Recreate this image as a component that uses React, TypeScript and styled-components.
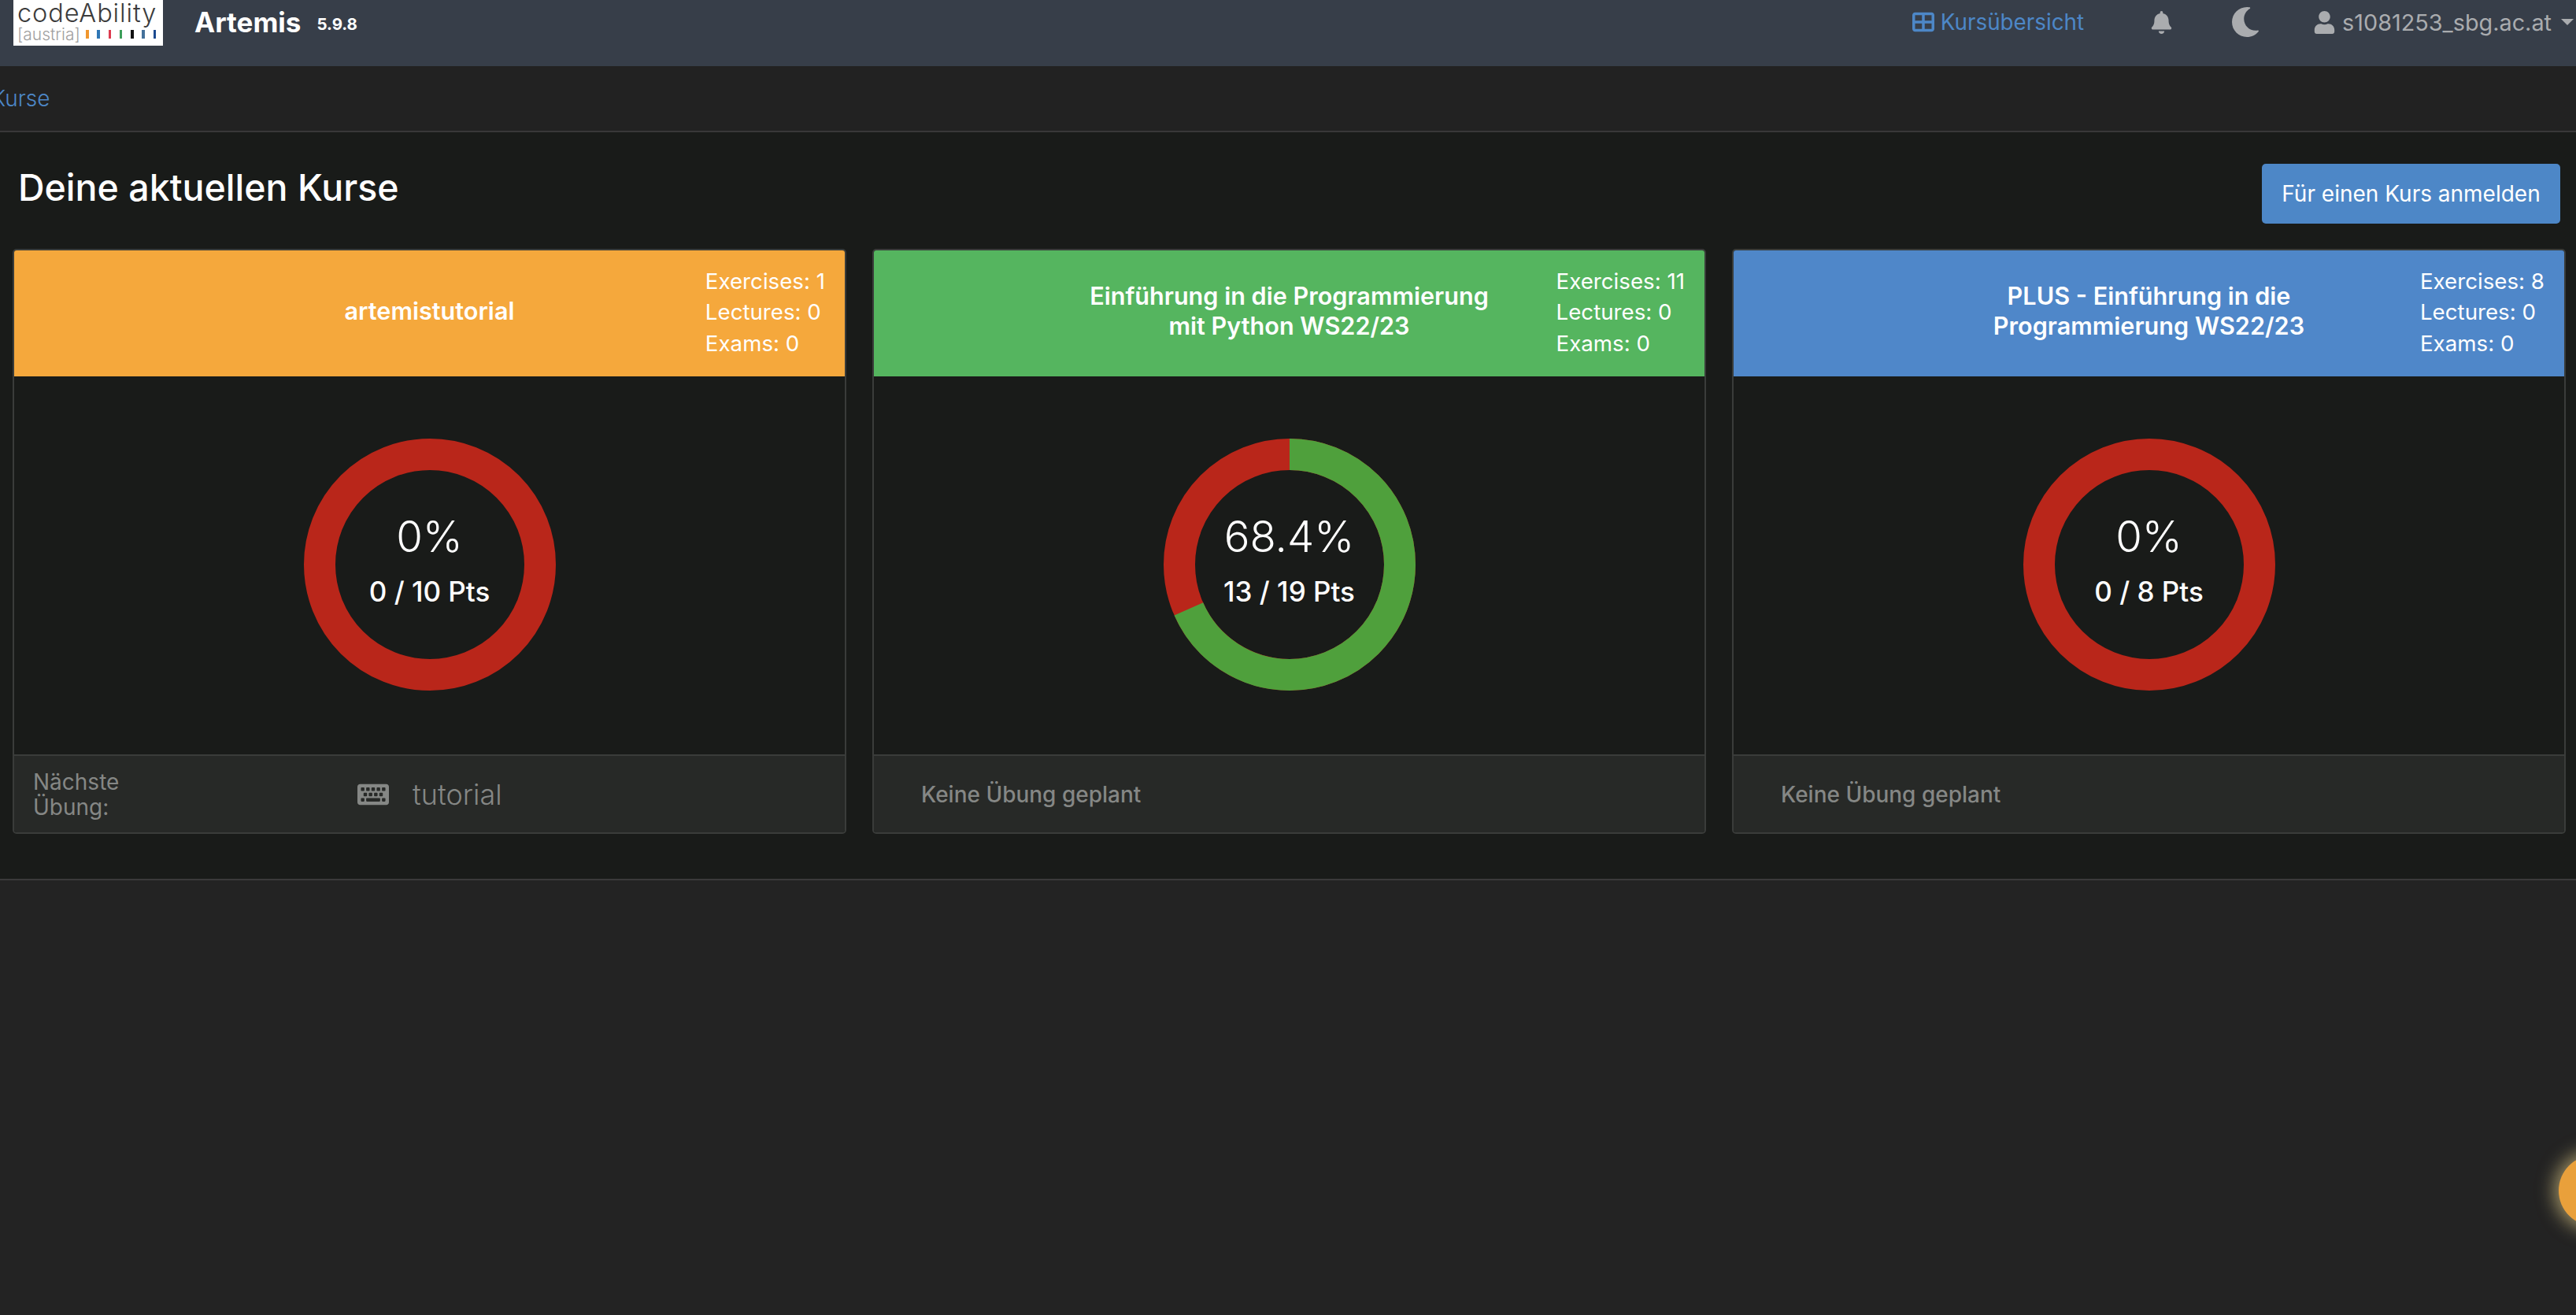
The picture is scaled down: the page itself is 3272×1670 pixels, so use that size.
import React from 'react';
import styled, { createGlobalStyle } from 'styled-components';
import { FaBell, FaKeyboard, FaMoon, FaUser } from 'react-icons/fa';
import { FaTableCellsLarge } from 'react-icons/fa6';

const GlobalStyle = createGlobalStyle`
  html, body {
    margin: 0;
    padding: 0;
    height: 100%;
    overflow: hidden;
    background: #232323;
    font-family: Inter, 'Liberation Sans', sans-serif;
  }
  * { box-sizing: border-box; }
`;

const Page = styled.div`
  display: flex;
  flex-direction: column;
  width: 100%;
  height: 1670px;
  background: #232323;
`;

const Navbar = styled.nav`
  display: flex;
  align-items: flex-start;
  justify-content: space-between;
  height: 84px;
  padding-left: 17px;
  background: #373e49;
`;

const Brand = styled.div`
  display: flex;
  align-items: flex-start;
`;

const Logo = styled.div`
  display: flex;
  flex-direction: column;
  width: 190px;
  height: 58px;
  padding: 0 5px;
  background: #fff;
`;

const LogoName = styled.span`
  font-family: Inter, sans-serif;
  font-size: 32.5px;
  font-weight: 300;
  letter-spacing: 0.9px;
  line-height: 34px;
  color: #3c3c3c;
  white-space: nowrap;
`;

const LogoRow = styled.div`
  display: flex;
  align-items: center;
  height: 19px;
`;

const LogoSub = styled.span`
  width: 87px;
  font-family: Inter, sans-serif;
  font-size: 21px;
  font-weight: 300;
  line-height: 19px;
  color: #9f9f9f;
  white-space: nowrap;
`;

const LogoTicks = styled.div`
  display: flex;
  gap: 10.75px;
`;

const LogoTick = styled.i<{ $color: string }>`
  display: block;
  width: 3.5px;
  height: 11px;
  background: ${(p) => p.$color};
`;

const AppName = styled.span`
  margin: 6px 0 0 40px;
  font-size: 35px;
  font-weight: 700;
  line-height: 44px;
  color: #fff;
`;

const Version = styled.span`
  margin: 19px 0 0 20px;
  font-size: 20.5px;
  font-weight: 700;
  line-height: 24px;
  color: #fff;
`;

const NavItems = styled.div`
  display: flex;
  align-items: center;
  height: 56px;
`;

const NavLink = styled.a<{ $active?: boolean; $size?: number }>`
  display: flex;
  align-items: center;
  gap: 8px;
  font-size: ${(p) => p.$size ?? 28.8}px;
  font-weight: 400;
  color: ${(p) => (p.$active ? '#4d87c7' : '#aaacaf')};
  white-space: nowrap;
`;

const Bell = styled(NavLink)`
  margin-left: 84px;
`;

const Moon = styled(NavLink)`
  margin-left: 73px;
`;

const UserLink = styled(NavLink)`
  margin-left: 67px;
`;

const Caret = styled.i`
  width: 0;
  height: 0;
  margin: 0 3px 0 4px;
  border-left: 8px solid transparent;
  border-right: 8px solid transparent;
  border-top: 8px solid #aaacaf;
`;

const Breadcrumb = styled.div`
  display: flex;
  align-items: center;
  height: 84px;
  border-bottom: 2px solid #383838;
  background: #222;
`;

const BreadcrumbLink = styled.a`
  margin-left: -11px;
  font-size: 28px;
  font-weight: 300;
  color: #4d87c7;
`;

const Content = styled.main`
  display: flex;
  flex-direction: column;
  height: 950px;
  padding: 40px 13px 0 16px;
  border-bottom: 2px solid #3a3a3a;
  background: #191b19;
`;

const HeadRow = styled.div`
  display: flex;
  align-items: flex-start;
  justify-content: space-between;
  height: 108px;
  padding-left: 7px;
  padding-right: 7px;
`;

const Title = styled.h2`
  margin: 0;
  font-size: 46.5px;
  font-weight: 500;
  line-height: 60px;
  color: #fff;
`;

const EnrollButton = styled.button`
  width: 379px;
  height: 76px;
  border: 0;
  border-radius: 5px;
  background: #4d87c7;
  color: #fff;
  font-family: inherit;
  font-size: 28px;
`;

const CardGrid = styled.div`
  display: grid;
  grid-template-columns: repeat(3, 1fr);
  gap: 33px;
`;

const Card = styled.article`
  display: flex;
  flex-direction: column;
  height: 743px;
  border: 2px solid #3a3c3a;
  border-radius: 5px;
  overflow: hidden;
`;

const CardHeader = styled.header<{ $color: string }>`
  display: grid;
  grid-template-columns: 3fr 6fr 3fr;
  align-items: center;
  height: 160px;
  flex-shrink: 0;
  background: ${(p) => p.$color};
  color: #fff;
`;

const CardTitle = styled.div`
  grid-column: 2;
  margin-top: -6px;
  font-size: 30.6px;
  font-weight: 600;
  line-height: 38px;
  text-align: center;
`;

const Stats = styled.div`
  grid-column: 3;
  justify-self: end;
  padding-right: 25px;
  margin-top: -2px;
  font-size: 27.7px;
  font-weight: 400;
  line-height: 39.5px;
  white-space: nowrap;
`;

const CardBody = styled.div`
  display: flex;
  flex: 1;
  align-items: center;
  justify-content: center;
  padding-bottom: 2px;
  background: #191b19;
`;

const RingWrap = styled.div`
  position: relative;
  width: 320px;
  height: 320px;
`;

const RingLabel = styled.div`
  position: absolute;
  inset: 0;
  display: flex;
  flex-direction: column;
  align-items: center;
  justify-content: center;
  padding-bottom: 2px;
  color: #fff;
`;

const Percent = styled.span`
  font-size: 54.5px;
  font-weight: 300;
  line-height: 70px;
`;

const Points = styled.span`
  font-size: 35px;
  font-weight: 500;
  line-height: 70px;
`;

const CardFooter = styled.footer`
  display: flex;
  align-items: center;
  height: 99px;
  flex-shrink: 0;
  border-top: 2px solid #3a3c3a;
  background: #272927;
  color: #858785;
`;

const NextLabel = styled.div`
  width: 436px;
  padding-left: 24px;
  font-size: 28px;
  line-height: 32px;
`;

const NextExercise = styled.div`
  display: flex;
  align-items: center;
  gap: 30px;
  font-size: 36px;
  font-weight: 300;
`;

const NoExercise = styled.div`
  padding-left: 60px;
  font-size: 28px;
  font-weight: 500;
`;

const GuidedTour = styled.div`
  position: fixed;
  left: 3250px;
  top: 1467px;
  width: 90px;
  height: 90px;
  border-radius: 50%;
  background: #e9a03b;
  box-shadow: 0 0 22px 6px rgba(250, 225, 150, 0.55);
`;

function Donut({ percent, children }: { percent: number; children: React.ReactNode }) {
  return (
    <RingWrap>
      <svg width="320" height="320" viewBox="0 0 320 320">
        <circle cx="160" cy="160" r="140" fill="none" stroke="#b9261a" strokeWidth="40" />
        {percent > 0 && (
          <circle
            cx="160"
            cy="160"
            r="140"
            fill="none"
            stroke="#4fa03c"
            strokeWidth="40"
            pathLength={100}
            strokeDasharray={`${percent} ${100 - percent}`}
            transform="rotate(-90 160 160)"
          />
        )}
      </svg>
      <RingLabel>{children}</RingLabel>
    </RingWrap>
  );
}

const ticks = ['#f0962d', '#2f77b5', '#dc3b4f', '#3d9e5a', '#111111', '#44719a', '#1c4a90'];

const courses = [
  {
    color: '#f5a83c',
    title: <>artemistutorial</>,
    exercises: 1,
    percent: 0,
    label: '0%',
    points: '0 / 10 Pts',
    next: true,
  },
  {
    color: '#55b55f',
    title: (
      <>
        Einführung in die Programmierung
        <br />
        mit Python WS22/23
      </>
    ),
    exercises: 11,
    percent: 68.4,
    label: '68.4%',
    points: '13 / 19 Pts',
    next: false,
  },
  {
    color: '#4f87c9',
    title: (
      <>
        PLUS - Einführung in die
        <br />
        Programmierung WS22/23
      </>
    ),
    exercises: 8,
    percent: 0,
    label: '0%',
    points: '0 / 8 Pts',
    next: false,
  },
];

export default function App() {
  return (
    <Page>
      <GlobalStyle />
      <Navbar>
        <Brand>
          <Logo>
            <LogoName>codeAbility</LogoName>
            <LogoRow>
              <LogoSub>[austria]</LogoSub>
              <LogoTicks>
                {ticks.map((c) => (
                  <LogoTick key={c} $color={c} />
                ))}
              </LogoTicks>
            </LogoRow>
          </Logo>
          <AppName>Artemis</AppName>
          <Version>5.9.8</Version>
        </Brand>
        <NavItems>
          <NavLink $active $size={27.8}>
            <FaTableCellsLarge size={28} />
            Kursübersicht
          </NavLink>
          <Bell>
            <FaBell size={29} />
          </Bell>
          <Moon>
            <FaMoon size={38} />
          </Moon>
          <UserLink>
            <FaUser size={29} />
            s1081253_sbg.ac.at
            <Caret />
          </UserLink>
        </NavItems>
      </Navbar>
      <Breadcrumb>
        <BreadcrumbLink>Kurse</BreadcrumbLink>
      </Breadcrumb>
      <Content>
        <HeadRow>
          <Title>Deine aktuellen Kurse</Title>
          <EnrollButton>Für einen Kurs anmelden</EnrollButton>
        </HeadRow>
        <CardGrid>
          {courses.map((course) => (
            <Card key={course.label + course.points}>
              <CardHeader $color={course.color}>
                <CardTitle>{course.title}</CardTitle>
                <Stats>
                  Exercises: {course.exercises}
                  <br />
                  Lectures: 0
                  <br />
                  Exams: 0
                </Stats>
              </CardHeader>
              <CardBody>
                <Donut percent={course.percent}>
                  <Percent>{course.label}</Percent>
                  <Points>{course.points}</Points>
                </Donut>
              </CardBody>
              <CardFooter>
                {course.next ? (
                  <>
                    <NextLabel>
                      Nächste
                      <br />
                      Übung:
                    </NextLabel>
                    <NextExercise>
                      <FaKeyboard size={40} />
                      tutorial
                    </NextExercise>
                  </>
                ) : (
                  <NoExercise>Keine Übung geplant</NoExercise>
                )}
              </CardFooter>
            </Card>
          ))}
        </CardGrid>
      </Content>
      <GuidedTour />
    </Page>
  );
}
